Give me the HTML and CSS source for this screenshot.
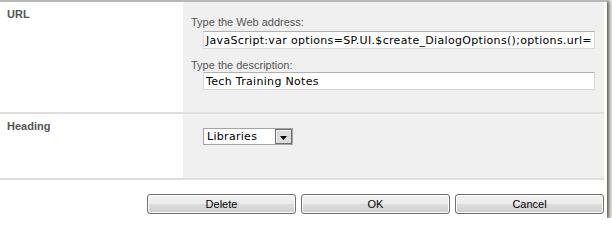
FILE: index.html
```html
<!DOCTYPE html>
<html>
<head>
<meta charset="utf-8">
<link rel="stylesheet" href="styles.css">
</head>
<body>
<div class="frame">
  <div class="row row-url">
    <div class="label">URL</div>
    <div class="field field-url">
      <div class="hint">Type the Web address:</div>
      <div class="input input-first">JavaScript:var options=SP.UI.$create_DialogOptions();options.url=</div>
      <div class="hint hint-second">Type the description:</div>
      <div class="input">Tech Training Notes</div>
    </div>
  </div>
  <div class="row row-heading">
    <div class="label">Heading</div>
    <div class="field field-heading">
      <div class="select">
        <span class="select-text">Libraries</span>
        <span class="select-btn"><svg width="7" height="4" viewBox="0 0 7 4"><path d="M0 0H7L3.5 4Z" fill="#000"/></svg></span>
      </div>
    </div>
  </div>
  <div class="footer">
    <button class="btn">Delete</button>
    <button class="btn">OK</button>
    <button class="btn">Cancel</button>
  </div>
</div>
</body>
</html>
```
FILE: styles.css
```css
html, body {
  margin: 0;
  padding: 0;
  background: #ffffff;
}
body {
  font-family: "Liberation Sans", Arial, sans-serif;
  font-size: 11px;
  line-height: 13px;
  color: #000;
}
.frame {
  width: 607px;
  height: 218px;
  box-sizing: border-box;
  background: #fff;
  border-top: 2px solid #b8b8b8;
  box-shadow: 1px 1px 5px 1px rgba(45, 35, 15, 0.9);
  display: flex;
  flex-direction: column;
}
.row {
  width: 604px;
  display: flex;
  border-bottom: 2px solid #dedede;
}
.row-url { height: 110px; }
.row-heading { height: 64px; }
.label {
  width: 183px;
  flex: none;
  box-sizing: border-box;
  padding: 6px 0 0 7px;
  font-weight: bold;
  color: #545454;
}
.field {
  flex: 1;
  background: #f0f0f0;
  box-sizing: border-box;
}
.field-url {
  padding: 14px 0 0 8px;
}
.hint {
  color: #555;
}
.input {
  width: 392px;
  height: 18px;
  box-sizing: border-box;
  margin-left: 12px;
  background: #fff;
  border: 1px solid #dadada;
  border-top-color: #b0b0b0;
  padding: 1px 0 0 2px;
  font-family: "DejaVu Sans", Verdana, sans-serif;
  font-size: 11px;
  letter-spacing: 0.32px;
  line-height: 15px;
  white-space: nowrap;
  overflow: hidden;
  color: #000;
}
.input-first { margin-top: 2px; }
.hint-second { margin-top: 10px; }
.field-heading {
  padding: 14px 0 0 20px;
}
.select {
  width: 90px;
  height: 17px;
  box-sizing: border-box;
  border: 1px solid #a5a5a5;
  background: #fff;
  display: flex;
}
.select-text {
  flex: 1;
  padding: 1px 0 0 3px;
  font-family: "DejaVu Sans", Verdana, sans-serif;
  font-size: 11px;
  letter-spacing: 0.3px;
  line-height: 14px;
}
.select-btn {
  width: 17px;
  height: 15px;
  box-sizing: border-box;
  border: 1px solid #707070;
  background: #dcdcdc;
  box-shadow: inset 1px 1px 0 #f4f4f4;
  display: flex;
  align-items: flex-end;
  justify-content: center;
  padding-bottom: 3px;
}
.select-btn svg { display: block; }
.footer {
  width: 604px;
  flex: 1;
  display: flex;
  justify-content: flex-end;
  align-items: flex-start;
  gap: 5px;
  padding-top: 14px;
  box-sizing: border-box;
}
.btn {
  width: 149px;
  height: 20px;
  box-sizing: border-box;
  margin: 0;
  padding: 0;
  border: 1px solid #707070;
  border-radius: 3px;
  background: linear-gradient(#f2f2f2 0%, #ebebeb 50%, #dddddd 51%, #cfcfcf 100%);
  box-shadow: inset 0 0 0 1px #fcfcfc;
  font-family: "Liberation Sans", Arial, sans-serif;
  font-size: 11px;
  line-height: 18px;
  color: #000;
}
```
